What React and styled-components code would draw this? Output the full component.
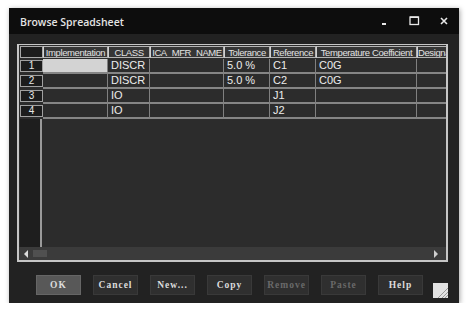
import React from "react";
import styled, { createGlobalStyle } from "styled-components";

const GlobalStyle = createGlobalStyle`
  body {
    margin: 0;
    background: #ffffff;
    font-family: "Liberation Sans", Arial, sans-serif;
  }
`;

const columns = [
  { name: "Implementation", w: 65 },
  { name: "CLASS", w: 42 },
  { name: "ICA_MFR_NAME", w: 74 },
  { name: "Tolerance", w: 46 },
  { name: "Reference", w: 46 },
  { name: "Temperature Coefficient", w: 101 },
  { name: "Designator", w: 40 },
];

const rows = [
  ["", "DISCR", "", "5.0 %", "C1", "C0G", ""],
  ["", "DISCR", "", "5.0 %", "C2", "C0G", ""],
  ["", "IO", "", "", "J1", "", ""],
  ["", "IO", "", "", "J2", "", ""],
];

const buttons = [
  { label: "OK", primary: true },
  { label: "Cancel" },
  { label: "New..." },
  { label: "Copy" },
  { label: "Remove", disabled: true },
  { label: "Paste", disabled: true },
  { label: "Help" },
];

const Window = styled.div`
  margin: 8px 0 0 9px;
  width: 450px;
  height: 295px;
  background: #222222;
  display: flex;
  flex-direction: column;
  box-shadow: 1px 1px 5px rgba(0, 0, 0, 0.35);
`;

const TitleBar = styled.div`
  height: 26px;
  background: #0d0d0d;
  display: flex;
  align-items: center;
  padding: 0 0 0 11px;
`;

const Title = styled.div`
  flex: 1;
  color: #e4e4e4;
  font-family: "Open Sans", sans-serif;
  font-size: 10.5px;
  font-weight: 600;
  padding-top: 2px;
`;

const Controls = styled.div`
  display: flex;
  align-items: center;
  height: 100%;
`;

const ControlButton = styled.div`
  width: 30px;
  height: 100%;
  display: flex;
  align-items: center;
  justify-content: center;
`;

const Body = styled.div`
  flex: 1;
  display: flex;
  flex-direction: column;
  padding: 10px 11px 7px 8px;
`;

const Grid = styled.div`
  height: 215px;
  border: 2px solid #c6c6c6;
  border-top-width: 1px;
  background: #2c2c2c;
  display: flex;
  flex-direction: column;
  overflow: hidden;
`;

const Row = styled.div`
  display: flex;
  height: ${(p) => p.$h}px;
  flex-shrink: 0;
`;

const Corner = styled.div`
  width: 23px;
  flex-shrink: 0;
  box-sizing: border-box;
  background: #1c1c1c;
  border: 1px solid #a8a8a8;
  margin: 1px 0 1px 1px;
`;

const HeadCell = styled.div`
  width: ${(p) => p.$w}px;
  flex-shrink: 0;
  box-sizing: border-box;
  margin: 1px 0;
  border: 1px solid #b4b4b4;
  border-left-color: #d0d0d0;
  background: #363636;
  color: #e2e2e2;
  font-size: 9.5px;
  letter-spacing: -0.4px;
  line-height: 11px;
  white-space: nowrap;
  overflow: hidden;
  text-align: center;
`;

const RowHead = styled.div`
  width: 23px;
  flex-shrink: 0;
  box-sizing: border-box;
  background: #1c1c1c;
  border: 1px solid #a0a0a0;
  margin: 1px 0 2px 1px;
  color: #e6e6e6;
  font-size: 10px;
  line-height: 10px;
  text-align: center;
`;

const Cell = styled.div`
  width: ${(p) => p.$w}px;
  flex-shrink: 0;
  box-sizing: border-box;
  border-right: 1px solid #808080;
  border-bottom: 2px solid #858585;
  background: ${(p) => (p.$selected ? "#d3d3d3" : "transparent")};
  color: #ececec;
  font-size: 11px;
  line-height: 13px;
  padding-left: 3px;
  white-space: nowrap;
  overflow: hidden;
`;

const Filler = styled.div`
  flex: 1;
  display: flex;
`;

const RowHeadFiller = styled.div`
  width: 22px;
  margin-left: 1px;
  box-sizing: border-box;
  background: #1e1e1e;
  border-right: 2px solid #9a9a9a;
`;

const ScrollBar = styled.div`
  height: 13px;
  flex-shrink: 0;
  background: #3b3b3b;
  display: flex;
  align-items: center;
  padding: 0 8px 0 5px;
  gap: 4px;
`;

const Thumb = styled.div`
  width: 14px;
  height: 7px;
  background: #505050;
`;

const Spacer = styled.div`
  flex: 1;
`;

const ButtonRow = styled.div`
  margin-top: 13px;
  height: 20px;
  display: flex;
  align-items: center;
  padding-left: 19px;
  gap: 12px;
`;

const Button = styled.div`
  width: 46px;
  height: 20px;
  box-sizing: border-box;
  background: ${(p) => (p.$primary ? "#585858" : "#2f2f2f")};
  border: 1px solid ${(p) => (p.$primary ? "#666666" : "#393939")};
  color: ${(p) => (p.$disabled ? "#6a6a6a" : "#dcdcdc")};
  font-family: "Liberation Serif", serif;
  font-weight: bold;
  font-size: 9.5px;
  letter-spacing: 1px;
  display: flex;
  align-items: center;
  justify-content: center;
`;

const Grip = styled.div`
  margin-left: -2px;
  margin-top: 10px;
  width: 15px;
  height: 15px;
  display: flex;
`;

export default function App() {
  return (
    <>
      <GlobalStyle />
      <Window>
        <TitleBar>
          <Title>Browse Spreadsheet</Title>
          <Controls>
            <ControlButton>
              <svg width="10" height="10" viewBox="0 0 10 10">
                <rect x="3" y="7" width="4" height="2" fill="#e8e8e8" />
              </svg>
            </ControlButton>
            <ControlButton>
              <svg width="11" height="10" viewBox="0 0 11 10">
                <rect x="1" y="1" width="8.5" height="7.5" fill="none" stroke="#e8e8e8" strokeWidth="1.3" />
                <rect x="1" y="0.5" width="8.5" height="1.5" fill="#e8e8e8" />
              </svg>
            </ControlButton>
            <ControlButton>
              <svg width="10" height="10" viewBox="0 0 10 10">
                <path d="M2 2 L8 8 M8 2 L2 8" stroke="#e8e8e8" strokeWidth="1.6" />
              </svg>
            </ControlButton>
          </Controls>
        </TitleBar>
        <Body>
          <Grid>
            <Row $h={14}>
              <Corner />
              {columns.map((c) => (
                <HeadCell key={c.name} $w={c.w}>
                  {c.name}
                </HeadCell>
              ))}
            </Row>
            {rows.map((r, i) => (
              <Row key={i} $h={15}>
                <RowHead>{i + 1}</RowHead>
                {r.map((v, j) => (
                  <Cell key={j} $w={columns[j].w} $selected={i === 0 && j === 0}>
                    {v}
                  </Cell>
                ))}
              </Row>
            ))}
            <Filler>
              <RowHeadFiller />
            </Filler>
            <ScrollBar>
              <svg width="5" height="8" viewBox="0 0 5 8">
                <path d="M4 0 L0 4 L4 8 Z" fill="#dcdcdc" />
              </svg>
              <Thumb />
              <Spacer />
              <svg width="5" height="8" viewBox="0 0 5 8">
                <path d="M1 0 L5 4 L1 8 Z" fill="#cfcfcf" />
              </svg>
            </ScrollBar>
          </Grid>
          <ButtonRow>
            {buttons.map((b) => (
              <Button key={b.label} $primary={b.primary} $disabled={b.disabled}>
                {b.label}
              </Button>
            ))}
            <Grip>
              <svg width="15" height="15" viewBox="0 0 15 15">
                <rect width="15" height="15" fill="#e2e2e2" />
                <path d="M15 5 L5 15 M15 9 L9 15 M15 12 L12 15" stroke="#9a9a9a" strokeWidth="1" />
              </svg>
            </Grip>
          </ButtonRow>
        </Body>
      </Window>
    </>
  );
}
